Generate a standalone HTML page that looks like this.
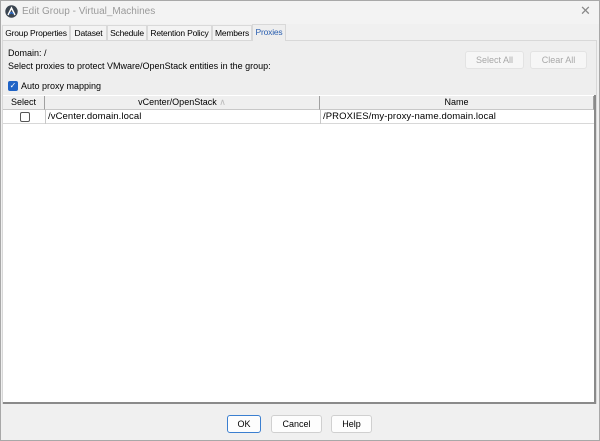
<!DOCTYPE html>
<html><head><meta charset="utf-8"><style>
*{box-sizing:border-box;margin:0;padding:0}
body{width:600px;height:441px;overflow:hidden;background:#f0f0f0;font-family:"Liberation Sans",sans-serif;font-size:9px;color:#000;position:relative;white-space:nowrap}
.abs{position:absolute}
.win{left:0;top:0;width:600px;height:441px;border:1px solid #a8a8a8}
.title{left:1px;top:1px;width:598px;height:23px;background:#f3f3f3}
.tab{top:25px;height:15px;line-height:14px;text-align:center;border:1px solid #d9d9d9;border-bottom:none;background:#f3f3f3;font-size:8.5px;letter-spacing:-0.2px;overflow:hidden}
.panel{left:2px;top:40px;width:595px;height:364px;border:1px solid #d8d8d8;background:#eeeeee}
.btn{height:18px;line-height:16px;text-align:center;border:1px solid #d0d0d0;border-radius:3px;background:#fdfdfd}
.cell{top:96px;height:14px;line-height:13px;text-align:center;border-right:1px solid #a0a0a0;border-bottom:1px solid #c8c8c8;background:#efefef}
</style></head><body>
<div class="abs win"></div>
<div class="abs title"></div>
<svg class="abs" style="left:5px;top:5px" width="13" height="13" viewBox="0 0 13 13"><circle cx="6.5" cy="6.5" r="6.2" fill="#3b4550"/><path d="M3 10 L6.5 3 L10 10" stroke="#fff" stroke-width="1.4" fill="none"/><path d="M4.5 9 L6.5 7.5 L8.5 9" stroke="#2a6fd6" stroke-width="1.2" fill="none"/></svg>
<div class="abs" style="left:22px;top:6px;font-size:10px;color:#9a9a9a">Edit Group - Virtual_Machines</div>
<div class="abs" style="left:580px;top:3px;font-size:13px;color:#888">✕</div>
<div class="abs tab" style="left:2px;width:68px">Group Properties</div>
<div class="abs tab" style="left:70px;width:37px">Dataset</div>
<div class="abs tab" style="left:107px;width:40px">Schedule</div>
<div class="abs tab" style="left:147px;width:65px">Retention Policy</div>
<div class="abs tab" style="left:212px;width:40px">Members</div>
<div class="abs panel"></div>
<div class="abs tab" style="left:252px;width:34px;top:24px;height:17px;background:#eeeeee;color:#2a5fb0;border-color:#d8d8d8">Proxies</div>
<div class="abs" style="left:8px;top:48px">Domain: /</div>
<div class="abs" style="left:8px;top:61px">Select proxies to protect VMware/OpenStack entities in the group:</div>
<div class="abs btn" style="left:465px;top:51px;width:59px;color:#a8a8a8;background:#f6f6f6;border-color:#e3e3e3">Select All</div>
<div class="abs btn" style="left:530px;top:51px;width:57px;color:#a8a8a8;background:#f6f6f6;border-color:#e3e3e3">Clear All</div>
<div class="abs" style="left:8px;top:81px;width:10px;height:10px;background:#1f63c6;border-radius:2px;color:#fff;font-size:8px;line-height:10px;text-align:center">✓</div>
<div class="abs" style="left:21px;top:81px">Auto proxy mapping</div>
<div class="abs" style="left:3px;top:95px;width:593px;height:309px;background:#fff;border-bottom:2px solid #8a8a8a;border-right:2px solid #8a8a8a"></div>
<div class="abs cell" style="left:3px;width:42px">Select</div>
<div class="abs cell" style="left:45px;width:275px">vCenter/OpenStack <span style="color:#bbb">∧</span></div>
<div class="abs cell" style="left:320px;width:274px">Name</div>
<div class="abs" style="left:3px;top:110px;width:591px;height:14px;border-bottom:1px solid #d8d8d8"></div>
<div class="abs" style="left:45px;top:110px;width:1px;height:14px;background:#c8c8c8"></div>
<div class="abs" style="left:320px;top:110px;width:1px;height:14px;background:#c8c8c8"></div>
<div class="abs" style="left:20px;top:112px;width:10px;height:10px;border:1px solid #555;border-radius:2px;background:#fff"></div>
<div class="abs" style="left:48px;top:111px;font-size:9.5px;letter-spacing:0.1px">/vCenter.domain.local</div>
<div class="abs" style="left:323px;top:111px;font-size:9.5px;letter-spacing:0.1px">/PROXIES/my-proxy-name.domain.local</div>
<div class="abs btn" style="left:227px;top:415px;width:34px;border-color:#3b7fd0">OK</div>
<div class="abs btn" style="left:271px;top:415px;width:51px">Cancel</div>
<div class="abs btn" style="left:331px;top:415px;width:41px">Help</div>
</body></html>
